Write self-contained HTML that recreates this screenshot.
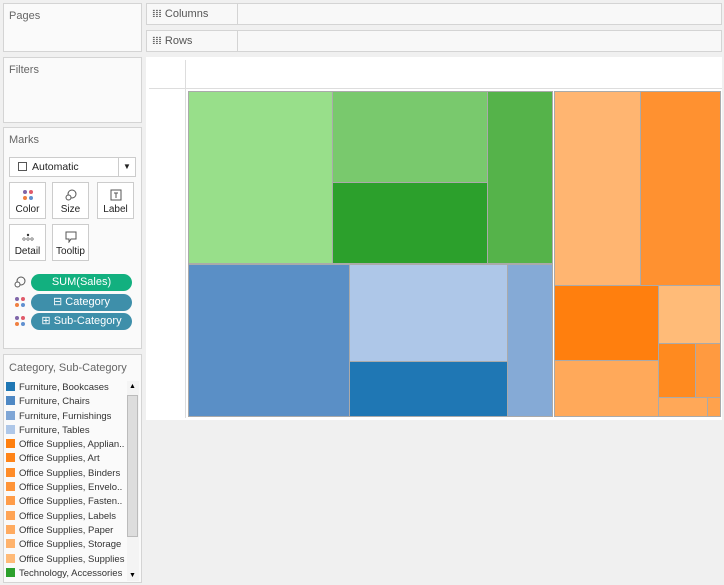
<!DOCTYPE html><html><head><style>
body{margin:0;width:724px;height:585px;background:#f0f0f0;font-family:"Liberation Sans",sans-serif;position:relative;overflow:hidden}
.p{position:absolute;background:#fafafa;border:1px solid #d4d4d4;box-sizing:border-box}
.t{position:absolute;font-size:11px;color:#666}
.r{position:absolute;box-sizing:border-box;border:1px solid #aaa}
.btn{position:absolute;width:37px;height:37px;background:#fff;border:1px solid #ccc;box-sizing:border-box;font-size:10px;text-align:center;color:#222}
.btn span{position:absolute;bottom:3px;left:0;right:0}
.pill{position:absolute;left:31px;width:101px;height:17px;border-radius:9px;color:#fff;font-size:11px;text-align:center;line-height:17px}
.leg{position:absolute;left:6px;font-size:9.5px;color:#333;line-height:14.3px}
.leg i{display:inline-block;width:9px;height:9px;margin-right:4px;vertical-align:-1px}
</style></head><body>
<div class="p" style="left:3px;top:3px;width:139px;height:49px"></div><div class="t" style="left:9px;top:10px">Pages</div>
<div class="p" style="left:3px;top:57px;width:139px;height:66px"></div><div class="t" style="left:9px;top:64px">Filters</div>
<div class="p" style="left:3px;top:127px;width:139px;height:222px"></div><div class="t" style="left:9px;top:134px">Marks</div>
<div style="position:absolute;left:9px;top:157px;width:127px;height:20px;background:#fff;border:1px solid #ccc;box-sizing:border-box;font-size:10.5px;line-height:18px;color:#222;padding-left:8px"><span style="display:inline-block;width:7px;height:7px;border:1px solid #555;margin-right:5px;vertical-align:-1px"></span>Automatic<span style="position:absolute;right:0;top:0;width:16px;height:18px;border-left:1px solid #ccc;text-align:center;font-size:8px">▼</span></div>
<div class="btn" style="left:9px;top:182px"><svg width="12" height="12" style="margin-top:6px"><circle cx="3" cy="3" r="2" fill="#8066a8"/><circle cx="9" cy="3" r="2" fill="#e05a6a"/><circle cx="3" cy="9" r="2" fill="#f08040"/><circle cx="9" cy="9" r="2" fill="#6090d0"/></svg><span>Color</span></div>
<div class="btn" style="left:52px;top:182px"><svg width="12" height="12" style="margin-top:6px"><circle cx="7" cy="5" r="4" fill="none" stroke="#555"/><circle cx="3.5" cy="8.5" r="2.5" fill="#fff" stroke="#555"/></svg><span>Size</span></div>
<div class="btn" style="left:97px;top:182px"><svg width="12" height="12" style="margin-top:6px"><rect x="1" y="1" width="10" height="10" fill="none" stroke="#555"/><path d="M4 4h4M6 4v5" stroke="#555"/></svg><span>Label</span></div>
<div class="btn" style="left:9px;top:224px"><svg width="12" height="12" style="margin-top:6px"><circle cx="6" cy="4" r="1.2" fill="#333"/><circle cx="2" cy="8" r="1.2" fill="none" stroke="#555" stroke-width=".7"/><circle cx="6" cy="8" r="1.2" fill="none" stroke="#555" stroke-width=".7"/><circle cx="10" cy="8" r="1.2" fill="none" stroke="#555" stroke-width=".7"/></svg><span>Detail</span></div>
<div class="btn" style="left:52px;top:224px"><svg width="12" height="12" style="margin-top:6px"><path d="M1 1h10v7H6l-2 3V8H1z" fill="none" stroke="#555"/></svg><span>Tooltip</span></div>
<svg style="position:absolute;left:14px;top:276px" width="12" height="12"><circle cx="7" cy="5" r="4" fill="none" stroke="#555"/><circle cx="3.5" cy="8.5" r="2.5" fill="#fff" stroke="#555"/></svg>
<svg style="position:absolute;left:14px;top:296px" width="12" height="12"><circle cx="3" cy="3" r="2" fill="#8066a8"/><circle cx="9" cy="3" r="2" fill="#e05a6a"/><circle cx="3" cy="9" r="2" fill="#f08040"/><circle cx="9" cy="9" r="2" fill="#6090d0"/></svg>
<svg style="position:absolute;left:14px;top:315px" width="12" height="12"><circle cx="3" cy="3" r="2" fill="#8066a8"/><circle cx="9" cy="3" r="2" fill="#e05a6a"/><circle cx="3" cy="9" r="2" fill="#f08040"/><circle cx="9" cy="9" r="2" fill="#6090d0"/></svg>
<div class="pill" style="top:274px;background:#12b07f">SUM(Sales)</div>
<div class="pill" style="top:294px;background:#3e8faa">⊟ Category</div>
<div class="pill" style="top:313px;background:#3e8faa">⊞ Sub-Category</div>
<div class="p" style="left:3px;top:354px;width:139px;height:229px"></div><div class="t" style="left:9px;top:362px">Category, Sub-Category</div>
<div style="position:absolute;left:127px;top:381px;width:12px;height:200px;background:#f4f4f4"><div style="position:absolute;left:0;top:14px;width:11px;height:142px;background:#ddd;border:1px solid #bbb;box-sizing:border-box"></div><div style="position:absolute;top:2px;left:2px;font-size:7px">▲</div><div style="position:absolute;bottom:2px;left:2px;font-size:7px">▼</div></div>
<div class="leg" style="top:381px">
<div><i style="background:#1f77b4"></i>Furniture, Bookcases</div>
<div><i style="background:#4e88c4"></i>Furniture, Chairs</div>
<div><i style="background:#7fa6d6"></i>Furniture, Furnishings</div>
<div><i style="background:#aec7e8"></i>Furniture, Tables</div>
<div><i style="background:#ff7f0e"></i>Office Supplies, Applian..</div>
<div><i style="background:#ff8418"></i>Office Supplies, Art</div>
<div><i style="background:#ff8c28"></i>Office Supplies, Binders</div>
<div><i style="background:#ff9438"></i>Office Supplies, Envelo..</div>
<div><i style="background:#ff9c48"></i>Office Supplies, Fasten..</div>
<div><i style="background:#ffa455"></i>Office Supplies, Labels</div>
<div><i style="background:#ffab60"></i>Office Supplies, Paper</div>
<div><i style="background:#ffb36c"></i>Office Supplies, Storage</div>
<div><i style="background:#ffba77"></i>Office Supplies, Supplies</div>
<div><i style="background:#2ca02c"></i>Technology, Accessories</div>
</div>
<div class="p" style="left:146px;top:3px;width:576px;height:22px;background:#f8f8f8"></div><div style="position:absolute;left:237px;top:3px;width:1px;height:22px;background:#d4d4d4"></div><div class="t" style="left:152px;top:7px;color:#555">𝍖 Columns</div>
<div class="p" style="left:146px;top:30px;width:576px;height:22px;background:#f8f8f8"></div><div style="position:absolute;left:237px;top:30px;width:1px;height:22px;background:#d4d4d4"></div><div class="t" style="left:152px;top:34px;color:#555">𝍖 Rows</div>
<div style="position:absolute;left:146px;top:57px;width:576px;height:363px;background:#fff"></div>
<div style="position:absolute;left:185px;top:60px;width:1px;height:358px;background:#ddd"></div>
<div style="position:absolute;left:149px;top:88px;width:573px;height:1px;background:#ddd"></div>
<div class="r" style="left:188px;top:91px;width:145px;height:173px;background:#98df8a"></div>
<div class="r" style="left:332px;top:91px;width:156px;height:92px;background:#79c96d"></div>
<div class="r" style="left:332px;top:182px;width:156px;height:82px;background:#2ca02c"></div>
<div class="r" style="left:487px;top:91px;width:66px;height:173px;background:#55b34a"></div>
<div class="r" style="left:188px;top:264px;width:162px;height:153px;background:#5a8fc6"></div>
<div class="r" style="left:349px;top:264px;width:159px;height:98px;background:#aec7e8"></div>
<div class="r" style="left:349px;top:361px;width:159px;height:56px;background:#1f77b4"></div>
<div class="r" style="left:507px;top:264px;width:46px;height:153px;background:#85aad6"></div>
<div class="r" style="left:554px;top:91px;width:87px;height:195px;background:#ffb571"></div>
<div class="r" style="left:640px;top:91px;width:81px;height:195px;background:#ff9130"></div>
<div class="r" style="left:554px;top:285px;width:105px;height:76px;background:#ff7f0e"></div>
<div class="r" style="left:658px;top:285px;width:63px;height:59px;background:#ffbb78"></div>
<div class="r" style="left:554px;top:360px;width:105px;height:57px;background:#ffa95a"></div>
<div class="r" style="left:658px;top:343px;width:38px;height:55px;background:#ff8a1f"></div>
<div class="r" style="left:695px;top:343px;width:26px;height:55px;background:#ff9a40"></div>
<div class="r" style="left:658px;top:397px;width:50px;height:20px;background:#ffa858"></div>
<div class="r" style="left:707px;top:397px;width:14px;height:20px;background:#ffa24c"></div>
</body></html>
